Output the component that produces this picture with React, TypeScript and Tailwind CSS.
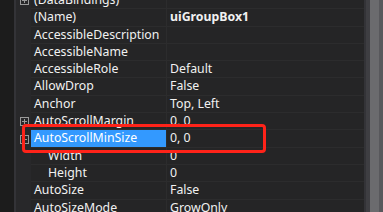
import React from 'react';

type Row = {
  name: string;
  value?: string;
  bold?: boolean;
  expander?: 'plus' | 'minus';
  child?: boolean;
  selected?: boolean;
};

const rows: Row[] = [
  { name: '(DataBindings)', expander: 'plus' },
  { name: '(Name)', value: 'uiGroupBox1', bold: true },
  { name: 'AccessibleDescription' },
  { name: 'AccessibleName' },
  { name: 'AccessibleRole', value: 'Default' },
  { name: 'AllowDrop', value: 'False' },
  { name: 'Anchor', value: 'Top, Left' },
  { name: 'AutoScrollMargin', value: '0, 0', expander: 'plus' },
  { name: 'AutoScrollMinSize', value: '0, 0', expander: 'minus', selected: true },
  { name: 'Width', value: '0', child: true },
  { name: 'Height', value: '0', child: true },
  { name: 'AutoSize', value: 'False' },
  { name: 'AutoSizeMode', value: 'GrowOnly' },
];

function Expander({ kind }: { kind: 'plus' | 'minus' }) {
  return (
    <svg width="9" height="9" viewBox="0 0 9 9" className="block">
      <rect x="0.5" y="0.5" width="8" height="8" fill="none" stroke="#9a9a9a" strokeWidth="1" />
      <line x1="2" y1="4.5" x2="7" y2="4.5" stroke="#9a9a9a" strokeWidth="1" />
      {kind === 'plus' && <line x1="4.5" y1="2" x2="4.5" y2="7" stroke="#9a9a9a" strokeWidth="1" />}
    </svg>
  );
}

export default function App() {
  return (
    <div
      className="relative w-[383px] h-[212px] overflow-hidden bg-[#252526] flex text-[12.3px] text-[#f1f1f1]"
      style={{ fontFamily: '"Noto Sans", "Open Sans", sans-serif' }}
    >
      {/* left dark strip */}
      <div className="w-[14px] h-full bg-[#1c1c1c]" />
      <div className="w-[2px] h-full bg-[#333337]" />

      {/* grid */}
      <div className="flex-1 flex flex-col mt-[-8px]">
        {rows.map((r) => (
          <div key={r.name} className="flex h-[17.3px] shrink-0 leading-none">
            <div className="w-[15px] bg-[#28282a] flex items-center justify-center pl-[1px]">
              {r.expander && <Expander kind={r.expander} />}
            </div>
            <div className="w-[135px] border-b border-[#2c2c2d] flex items-center">
              <div
                className={
                  r.selected
                    ? 'h-[17px] w-full flex items-center bg-[#3399ff] text-white pl-[3px]'
                    : 'flex items-center ' + (r.child ? 'pl-[17px]' : 'pl-[3px]')
                }
              >
                {r.name}
              </div>
            </div>
            <div className="w-[1px] bg-[#2c2c2d]" />
            <div className={'flex-1 border-b border-[#2c2c2d] flex items-center pl-[3px] ' + (r.bold ? 'font-bold' : '')}>
              {r.value}
            </div>
          </div>
        ))}
      </div>

      {/* scrollbar */}
      <div className="w-[2px] h-full bg-[#333337]" />
      <div className="w-[4px] h-full bg-[#3e3e42]" />
      <div className="w-[9px] h-full bg-[#6b6b6e]" />
      <div className="w-[4px] h-full bg-[#58585c]" />

      {/* red annotation box */}
      <div className="absolute left-[22px] top-[124px] w-[244px] h-[29px] border-[3px] border-[#ff2319] rounded-[4px]" />
    </div>
  );
}
